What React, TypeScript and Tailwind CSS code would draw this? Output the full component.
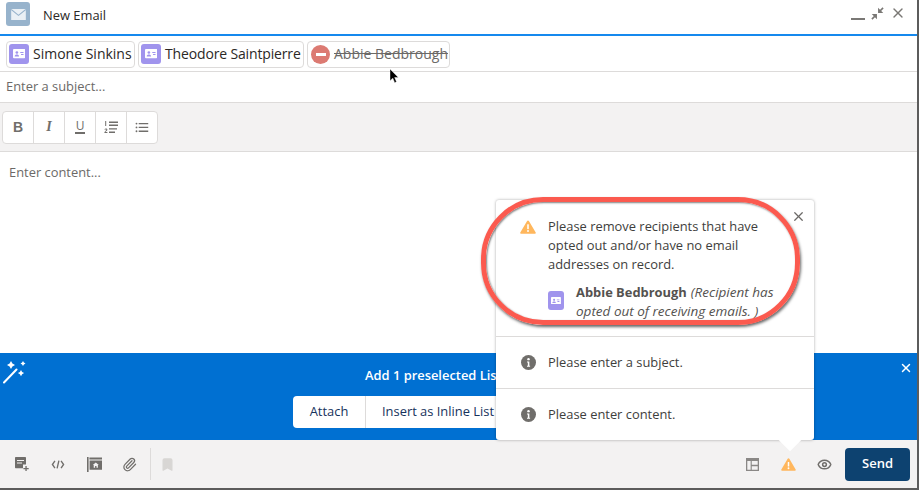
import { Bookmark, Eye, Paperclip, X } from "lucide-react";

const font = { fontFamily: '"Open Sans", "Noto Sans", sans-serif' };

function ContactIcon({ className }: { className: string }) {
  return (
    <span className={`flex items-center justify-center rounded-[3px] bg-[#a094ed] ${className}`}>
      <svg viewBox="0 0 16 12" className="w-[62%]" fill="#fff">
        <path d="M1.2 0h13.6c.7 0 1.2.5 1.2 1.2v9.6c0 .7-.5 1.2-1.2 1.2H1.2C.5 12 0 11.5 0 10.8V1.2C0 .5.5 0 1.2 0z" />
        <circle cx="5" cy="4.6" r="1.7" fill="#a094ed" />
        <path d="M2.2 9.6c0-1.6 1.3-2.4 2.8-2.4s2.8.8 2.8 2.4zM9.4 4h4.2v1.3H9.4zM10.4 6.6h3.2v1.3h-3.2z" fill="#a094ed" />
      </svg>
    </span>
  );
}

function Pill({ children, width }: { children: React.ReactNode; width: string }) {
  return (
    <div className={`flex h-[27px] items-center rounded-[4px] border border-[#dddbda] bg-white pl-[2px] text-[14px] leading-none text-[#2b2826] ${width}`}>
      {children}
    </div>
  );
}

function WarnIcon({ className }: { className: string }) {
  return (
    <svg viewBox="0 0 16 14" className={className}>
      <path d="M8 .4c.4 0 .7.2.9.5l6.8 11.5c.4.7 0 1.4-.8 1.4H1.1c-.8 0-1.2-.7-.8-1.4L7.1.9c.2-.3.5-.5.9-.5z" fill="#ffb75d" />
      <rect x="7.2" y="4.2" width="1.6" height="5" rx=".4" fill="#fff" />
      <circle cx="8" cy="11" r="1" fill="#fff" />
    </svg>
  );
}

function InfoIcon() {
  return (
    <svg viewBox="0 0 16 16" className="h-[15px] w-[15px] shrink-0">
      <circle cx="8" cy="8" r="8" fill="#706e6b" />
      <circle cx="8" cy="4.4" r="1.3" fill="#fff" />
      <path d="M6.4 6.8h2.5v4.6h.8v1.2H6.4v-1.2h.9V8H6.4z" fill="#fff" />
    </svg>
  );
}

function FormatButton({ children, last }: { children: React.ReactNode; last?: boolean }) {
  return (
    <div className={`flex h-[31px] items-center justify-center ${last ? "w-[30px]" : "w-[31px] border-r border-[#dddbda]"}`}>
      {children}
    </div>
  );
}

export default function App() {
  return (
    <div style={font} className="relative flex h-[490px] w-[919px] flex-col overflow-hidden border-r-2 border-b-2 border-r-[#5c5c5c] border-b-[#5c5c5c] bg-white text-[#3e3e3c]">
      {/* header */}
      <div className="flex h-[36px] shrink-0 items-start border-b-2 border-[#1589ee] pl-[6px] pr-[11px] pt-[2px]">
        <div className="flex h-[24px] w-[24px] items-center justify-center rounded-[3px] bg-[#97b3cc]">
          <svg viewBox="0 0 16 12" className="h-[11px] w-[15px]">
            <path d="M0 0h16v12H0z" fill="#eaf0f5" />
            <path d="M0 .5l8 6.4L16 .5" fill="none" stroke="#97b3cc" strokeWidth="1.2" />
          </svg>
        </div>
        <span className="ml-[13px] mt-[4px] text-[12.9px] leading-[18px] text-[#2b2826]">New Email</span>
        <div className="ml-auto mt-[3px] flex items-center gap-[6px] text-[#7a7875]">
          <div className="mt-[11px] h-[2px] w-[14px] bg-[#7a7875]" />
          <svg viewBox="0 0 14 14" className="h-[13px] w-[13px]" fill="#7a7875">
            <path d="M1 13l3.6-3.6M13 1L9.4 4.6" stroke="#7a7875" strokeWidth="1.8" />
            <path d="M0.8 7.6h5.6v5.6zM13.2 6.4H7.6V.8z" />
          </svg>
          <X size={16} strokeWidth={2} />
        </div>
      </div>

      {/* recipients */}
      <div className="flex h-[36px] shrink-0 items-center gap-[3px] border-b border-[#dddbda] pl-[6px] pt-[1px]">
        <Pill width="w-[129px]">
          <ContactIcon className="h-[20px] w-[20px]" />
          <span className="ml-[4px]">Simone Sinkins</span>
        </Pill>
        <Pill width="w-[166px]">
          <ContactIcon className="h-[20px] w-[20px]" />
          <span className="ml-[4px] tracking-[-0.15px]">Theodore Saintpierre</span>
        </Pill>
        <Pill width="w-[143px]">
          <span className="ml-[1px] flex h-[19px] w-[19px] items-center justify-center rounded-full bg-[#dc7a72]">
            <span className="h-[3px] w-[10px] bg-white" />
          </span>
          <span className="ml-[4px] text-[#6b6967] line-through">Abbie Bedbrough</span>
        </Pill>
      </div>

      {/* subject */}
      <div className="flex h-[31px] shrink-0 items-center border-b border-[#dddbda] pl-[6px] text-[12.9px] text-[#6b6967]">
        Enter a subject...
      </div>

      {/* format bar */}
      <div className="flex h-[49px] shrink-0 items-center border-b border-[#dddbda] bg-[#f3f2f2] pl-[2px]">
        <div className="flex items-center rounded-[4px] border border-[#dddbda] bg-white text-[#706e6b]">
          <FormatButton><span className="text-[14px] font-bold leading-none" style={{ fontFamily: '"Liberation Sans", sans-serif' }}>B</span></FormatButton>
          <FormatButton><span className="text-[14px] font-bold italic leading-none" style={{ fontFamily: '"Liberation Serif", serif' }}>I</span></FormatButton>
          <FormatButton><span className="border-b-2 border-[#706e6b] px-[1px] text-[12px] leading-[12px]">U</span></FormatButton>
          <FormatButton>
            <svg viewBox="0 0 14 13" className="h-[13px] w-[14px]" fill="#706e6b">
              <path d="M1.2 0h1v5h-1zM5 .5h9v1.4H5zM5 3.6h9V5H5zM5 7.2h8v1.4H5zM5 10.6h6V12H5zM.4 8.2c.6-1 3-1 3 .5 0 1-1.7 1.6-2 2.4h2v1H.3c0-1.8 2.1-2.5 2.1-3.3 0-.6-1-.5-1.4 0z" />
            </svg>
          </FormatButton>
          <FormatButton last>
            <svg viewBox="0 0 14 12" className="h-[11px] w-[14px]" fill="#706e6b">
              <path d="M3.4 1h10.4v1.4H3.4zM3.4 5.2h10.4v1.4H3.4zM3.4 9.4h10.4v1.4H3.4z" />
              <circle cx="1" cy="1.7" r="1" /><circle cx="1" cy="5.9" r="1" /><circle cx="1" cy="10.1" r="1" />
            </svg>
          </FormatButton>
        </div>
      </div>

      {/* content */}
      <div className="flex-1 pl-[9px] pt-[11px] text-[12.9px] leading-[18px] text-[#6b6967]">Enter content...</div>

      {/* list prompt */}
      <div className="relative flex h-[87px] shrink-0 flex-col items-start bg-[#0070d2] pt-[12px] text-white">
        <svg viewBox="0 0 24 24" className="absolute left-[3px] top-[7px] h-[24px] w-[24px]" fill="#fff">
          <path d="M1 22.5L13.5 9.5" stroke="#fff" strokeWidth="2" strokeLinecap="round" />
          <path d="M8 1l1.4 2.6L12 5 9.4 6.4 8 9 6.6 6.4 4 5l2.6-1.4zM20 1l.9 1.6 1.6.9-1.6.9L20 6l-.9-1.6-1.6-.9 1.6-.9zM18 10l1.1 2 2 1.1-2 1.1-1.1 2-1.1-2-2-1.1 2-1.1z" />
        </svg>
        <span className="ml-[365px] text-[12.9px] font-semibold leading-[20px]">Add 1 preselected List</span>
        <div className="ml-[293px] mt-[11px] flex h-[32px] items-center rounded-[4px] bg-white text-[12.9px] text-[#16325c]">
          <span className="flex h-full w-[73px] items-center justify-center border-r border-[#dddbda]">Attach</span>
          <span className="flex h-full w-[144px] items-center pl-[16px]">Insert as Inline List</span>
        </div>
        <X size={14} strokeWidth={2.5} className="absolute right-[4px] top-[8px]" />
      </div>

      {/* footer */}
      <div className="flex h-[48px] shrink-0 items-center bg-[#f3f2f2] pl-[15px] pr-[7px] text-[#706e6b]">
        <svg viewBox="0 0 14 14" className="h-[14px] w-[14px]" fill="#706e6b">
          <path d="M1 0h9c.6 0 1 .4 1 1v6.5H8v3.7H1c-.6 0-1-.4-1-1V1c0-.6.4-1 1-1z" />
          <path d="M2 3h7v1H2zM2 5.4h5v1H2z" fill="#f3f2f2" />
          <path d="M10.4 9h1.3v2h2v1.3h-2v1.7h-1.3v-1.7h-2V11h2z" />
        </svg>
        <svg viewBox="0 0 14 10" className="ml-[22px] h-[9px] w-[14px]" fill="none" stroke="#706e6b" strokeWidth="1.5">
          <path d="M3.6 1L.8 5l2.8 4M10.4 1l2.8 4-2.8 4M8 .6L6 9.4" />
        </svg>
        <svg viewBox="0 0 15 15" className="ml-[22px] h-[15px] w-[15px]" fill="#706e6b">
          <path d="M0 0h1.6v15H0zM2.4.4H15v2H2.4zM2.6 3.4H15v9.4H2.6z" />
          <path d="M8.8 5.4l3 2.6h-.9v2.8H9.5V9H8.1v1.8H6.7V8h-.9z" fill="#f3f2f2" />
        </svg>
        <Paperclip size={15} strokeWidth={2} className="ml-[20px]" />
        <div className="ml-[13px] h-[32px] w-px bg-[#dddbda]" />
        <Bookmark size={15} className="ml-[9px] text-[#d8d6d4]" fill="#d8d6d4" />
        <div className="ml-auto flex items-center">
          <svg viewBox="0 0 14 14" className="h-[13px] w-[13px]" fill="#8a8886">
            <path d="M0 0h14v14H0zM1.4 3.2v9.4h3.6V3.2zM6.2 3.2v4.2h6.4V3.2zM6.2 8.8v3.8h6.4V8.8z" fillRule="evenodd" />
          </svg>
          <WarnIcon className="ml-[22px] h-[13px] w-[15px]" />
          <Eye size={15} strokeWidth={2.4} className="ml-[21px]" />
          <button className="ml-[13px] flex h-[33px] w-[65px] items-center justify-center rounded-[4px] bg-[#0d4270] text-[13px] font-semibold text-white">
            Send
          </button>
        </div>
      </div>

      {/* validation popover */}
      <div className="absolute left-[496px] top-[200px] flex h-[240px] w-[318px] flex-col rounded-[3px] bg-white shadow-[0_0_3px_rgba(0,0,0,0.35)]">
        <div className="flex h-[137px] shrink-0 border-b border-[#dddbda] pl-[24px] pt-[17px] text-[12.9px] leading-[19px] text-[#3e3e3c]">
          <WarnIcon className="mt-[3px] h-[14px] w-[16px] shrink-0" />
          <div className="ml-[12px] w-[225px]">
            <p>Please remove recipients that have opted out and/or have no email addresses on record.</p>
            <div className="mt-[9px] flex">
              <ContactIcon className="mt-[8px] h-[19px] w-[16px] shrink-0" />
              <div className="ml-[12px] whitespace-nowrap text-[#54524f]">
                <p className="flex gap-[4px]">
                  <span className="font-bold">Abbie Bedbrough</span>
                  <em className="text-[13.5px]">(Recipient has</em>
                </p>
                <p><em className="text-[13.5px]">opted out of receiving emails. )</em></p>
              </div>
            </div>
          </div>
          <X size={15} strokeWidth={2} className="absolute right-[8px] top-[9px] text-[#6b6967]" />
        </div>
        <div className="flex h-[52px] shrink-0 items-center gap-[12px] border-b border-[#dddbda] pl-[25px] text-[12.9px]">
          <InfoIcon />
          <span>Please enter a subject.</span>
        </div>
        <div className="flex flex-1 items-center gap-[12px] pl-[25px] text-[12.9px]">
          <InfoIcon />
          <span>Please enter content.</span>
        </div>
        <div className="absolute bottom-[-8px] left-[286px] h-[16px] w-[16px] rotate-45 bg-white" />
      </div>

      {/* red callout ring */}
      <div className="absolute left-[481px] top-[197px] h-[128px] w-[319px] rounded-[62px] border-[5px] border-[#fb5a4f] shadow-[1px_2px_3px_rgba(0,0,0,0.6),inset_1px_1px_2px_rgba(0,0,0,0.5)]" />

      {/* mouse cursor */}
      <svg viewBox="0 0 12 18" className="absolute left-[390px] top-[68px] h-[17px] w-[10px]">
        <path d="M0 0v14l3.4-3 2.2 5.4 2.2-1-2.2-5.2H10z" fill="#000" stroke="#fff" strokeWidth=".5" />
      </svg>
    </div>
  );
}
